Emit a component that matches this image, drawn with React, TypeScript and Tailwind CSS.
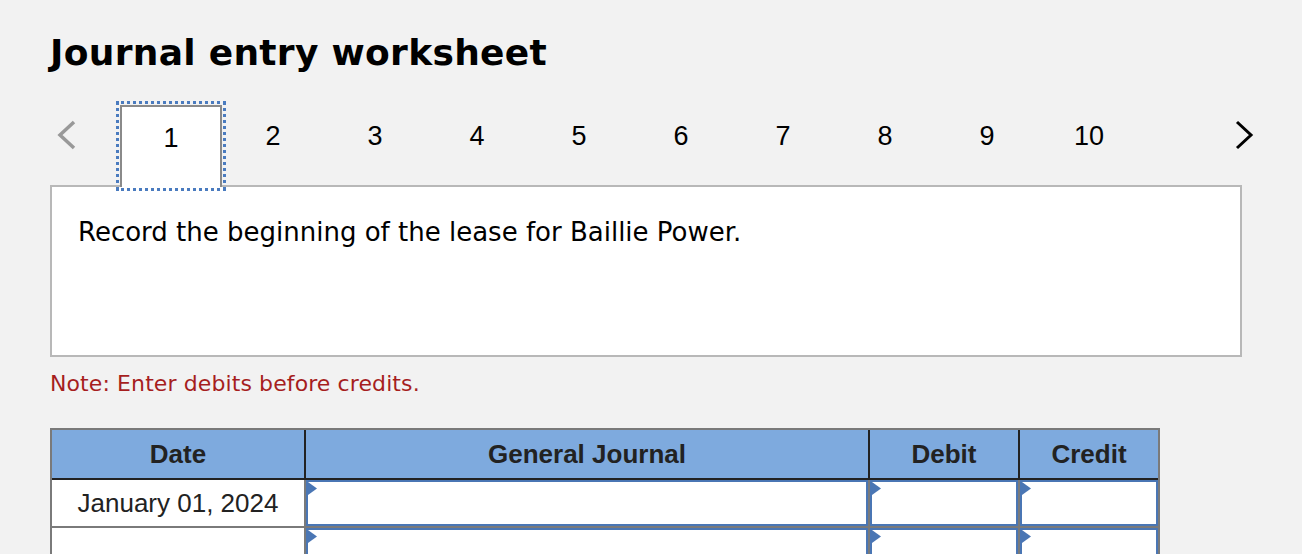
import React from "react";

const tabs = [1, 2, 3, 4, 5, 6, 7, 8, 9, 10];

function Tri() {
  return (
    <svg className="absolute left-0 top-0" width="10" height="14" viewBox="0 0 10 14">
      <polygon points="0,0 9,6.5 0,13" fill="#4a76b4" />
    </svg>
  );
}

function InputCell() {
  return (
    <div className="border-l-2 border-[#7a7a7a] h-full">
      <div className="relative h-full border-2 border-[#4a76b4] bg-white">
        <Tri />
      </div>
    </div>
  );
}

export default function App() {
  return (
    <div className="w-[1302px] h-[554px] overflow-hidden bg-[#f2f2f2] pl-[50px] pt-[29px]">
      <h1 className="font-['DejaVu_Sans',sans-serif] font-bold text-[36px] leading-[48px] text-black tracking-[0.3px]">
        Journal entry worksheet
      </h1>
      <div className="mt-[28px] flex items-start h-[80px] w-[1212px] relative z-10">
        <div className="w-[70px] h-full flex items-start pt-[15px] pl-[7px]">
          <svg width="20" height="30" viewBox="0 0 20 30">
            <polyline points="17,2 3,15 17,28" fill="none" stroke="#999999" strokeWidth="3.5" />
          </svg>
        </div>
        {tabs.map((t) => (
          <div
            key={t}
            className={
              "w-[102px] h-[82px] flex justify-center pt-[15px] font-['Liberation_Sans',Arial,sans-serif] text-[27px] leading-[32px] text-black " +
              (t === 1
                ? "bg-white border-2 border-b-0 border-[#8a8a8a] outline-[3px] outline-dotted outline-[#4a7bbf] outline-offset-[1px]"
                : "")
            }
          >
            {t}
          </div>
        ))}
        <div className="flex-1" />
        <div className="w-[28px] h-full flex items-start pt-[15px]">
          <svg width="20" height="30" viewBox="0 0 20 30">
            <polyline points="3,2 17,15 3,28" fill="none" stroke="#000000" strokeWidth="3" />
          </svg>
        </div>
      </div>
      <div className="w-[1192px] h-[172px] bg-white border-2 border-[#b8b8b8] pl-[26px] pt-[28px] font-['DejaVu_Sans',sans-serif] text-[26px] leading-[34px] text-black">
        Record the beginning of the lease for Baillie Power.
      </div>
      <div className="mt-[12px] font-['DejaVu_Sans',sans-serif] text-[22px] leading-[30px] text-[#a61e1e] tracking-[0.1px]">
        Note: Enter debits before credits.
      </div>
      <div className="mt-[29px] w-[1110px] border-2 border-b-0 border-[#7a7a7a] font-['Liberation_Sans',Arial,sans-serif]">
        <div className="grid grid-cols-[252px_564px_150px_140px] h-[50px] bg-[#7eaade] border-b-2 border-[#222] text-[26px] font-bold text-[#222]">
          <div className="flex items-center justify-center">Date</div>
          <div className="flex items-center justify-center border-l-2 border-[#222]">General Journal</div>
          <div className="flex items-center justify-center border-l-2 border-[#222]">Debit</div>
          <div className="flex items-center justify-center border-l-2 border-[#222]">Credit</div>
        </div>
        <div className="grid grid-cols-[252px_564px_150px_140px] h-[48px] border-b-2 border-[#7a7a7a]">
          <div className="bg-white flex items-center justify-center text-[26px] text-[#222]">January 01, 2024</div>
          <InputCell />
          <InputCell />
          <InputCell />
        </div>
        <div className="grid grid-cols-[252px_564px_150px_140px] h-[48px] border-b-2 border-[#7a7a7a]">
          <div className="bg-white" />
          <InputCell />
          <InputCell />
          <InputCell />
        </div>
      </div>
    </div>
  );
}
